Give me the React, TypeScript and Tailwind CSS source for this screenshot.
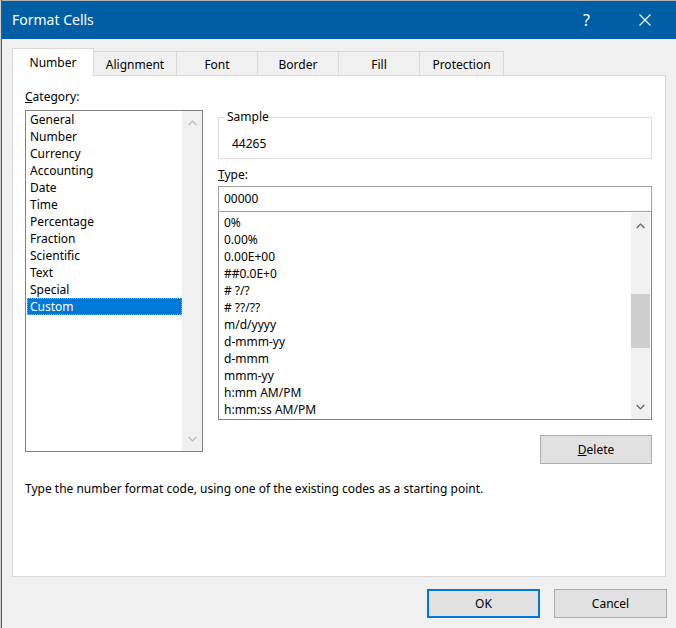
import React from "react";

const Chevron = ({ dir, color }: { dir: "up" | "down"; color: string }) => (
  <svg width="9" height="6" viewBox="0 0 9 6">
    <path
      d={dir === "up" ? "M0.7 5 L4.5 1.2 L8.3 5" : "M0.7 1 L4.5 4.8 L8.3 1"}
      fill="none"
      stroke={color}
      strokeWidth="1.2"
    />
  </svg>
);

const categories = [
  "General",
  "Number",
  "Currency",
  "Accounting",
  "Date",
  "Time",
  "Percentage",
  "Fraction",
  "Scientific",
  "Text",
  "Special",
  "Custom",
];

const types = [
  "0%",
  "0.00%",
  "0.00E+00",
  "##0.0E+0",
  "# ?/?",
  "# ??/??",
  "m/d/yyyy",
  "d-mmm-yy",
  "d-mmm",
  "mmm-yy",
  "h:mm AM/PM",
  "h:mm:ss AM/PM",
];

const tabs = [
  { name: "Number", w: "w-[82px]" },
  { name: "Alignment", w: "w-[84px]" },
  { name: "Font", w: "w-[82px]" },
  { name: "Border", w: "w-[82px]" },
  { name: "Fill", w: "w-[82px]" },
  { name: "Protection", w: "w-[85px]" },
];

export default function App() {
  return (
    <div className="w-[676px] h-[628px] flex bg-[#f0f0f0] text-black text-[12px] [font-family:'Noto_Sans',sans-serif] overflow-hidden">
      <div className="w-px bg-[#cfcfcf]" />
      <div className="flex-1 flex flex-col border-l border-[#1d62a6]">
        {/* Title bar */}
        <div className="h-[39px] border-t border-[#b4b4b4] bg-[#005ea5] flex items-center text-white">
          <div className="ml-[10px] text-[14px] leading-[20px] pb-[1px]">Format Cells</div>
          <div className="flex-1" />
          <div className="text-[16px] leading-[20px] mr-[49px] pb-[1px]">?</div>
          <div className="mr-[25px] flex items-center">
            <svg width="12" height="12" viewBox="0 0 12 12">
              <path d="M0.5 0.5 L11.5 11.5 M11.5 0.5 L0.5 11.5" stroke="white" strokeWidth="1.1" fill="none" />
            </svg>
          </div>
        </div>

        {/* Body */}
        <div className="pl-[10px] pt-[9px] flex flex-col">
          {/* Tabs */}
          <div className="flex items-end h-[28px] -mb-px">
            {tabs.map((t, i) =>
              i === 0 ? (
                <div
                  key={t.name}
                  className={`relative ${t.w} h-[28px] bg-white border-l border-t border-r border-[#d9d9d9] flex items-center justify-center`}
                >
                  {t.name}
                </div>
              ) : (
                <div
                  key={t.name}
                  className={`${t.w} -ml-px h-[25px] bg-[#f0f0f0] border-l border-t border-r border-[#d9d9d9] flex items-center justify-center pt-[1px]`}
                >
                  {t.name}
                </div>
              )
            )}
          </div>

          {/* Panel */}
          <div className="w-[654px] h-[502px] bg-white border border-[#d9d9d9] px-[12px] flex flex-col">
            <div className="flex gap-[15px] items-start">
              {/* Left column */}
              <div className="w-[178px] pt-[13px] flex flex-col">
                <div className="leading-[16px] h-[16px] mb-[5px]">
                  <span className="underline">C</span>ategory:
                </div>
                <div className="h-[342px] border border-[#828282] flex">
                  <div className="flex-1 flex flex-col pl-px">
                    {categories.map((c) =>
                      c === "Custom" ? (
                        <div
                          key={c}
                          className="h-[17px] pl-[2px] bg-[#0078d7] text-white border border-dotted border-[#f0a030]"
                        >
                          <span className="block leading-[16px]">{c}</span>
                        </div>
                      ) : (
                        <div key={c} className="h-[17px] leading-[17px] pl-[3px]">
                          {c}
                        </div>
                      )
                    )}
                  </div>
                  <div className="w-[20px] bg-[#f0f0f0] flex flex-col items-center justify-between pt-[9px] pb-[9px]">
                    <Chevron dir="up" color="#b6b6b6" />
                    <Chevron dir="down" color="#b6b6b6" />
                  </div>
                </div>
              </div>

              {/* Right column */}
              <div className="w-[434px] pt-[33px] flex flex-col">
                <fieldset className="border border-[#dcdcdc] pt-[11px] pb-[6px]">
                  <legend className="ml-[5px] pl-[3px] pr-[1px] leading-[16px]">Sample</legend>
                  <div className="leading-[16px] pl-[13px]">44265</div>
                </fieldset>
                <div className="mt-[8px] leading-[16px] h-[16px]">
                  <span className="underline">T</span>ype:
                </div>
                <div className="mt-[3px] h-[26px] border border-[#a0a0a0] flex items-center pl-[5px] pb-[1px]">
                  00000
                </div>
                <div className="h-[208px] border border-t-0 border-[#828282] flex">
                  <div className="flex-1 flex flex-col pt-[2px] pl-[5px] overflow-hidden">
                    {types.map((t) => (
                      <div key={t} className="h-[17px] leading-[17px] whitespace-pre">
                        {t}
                      </div>
                    ))}
                  </div>
                  <div className="w-[19px] mt-[1px] mr-px bg-[#f0f0f0] flex flex-col items-center">
                    <div className="h-[24px] flex items-center justify-center pt-[1px]">
                      <Chevron dir="up" color="#606060" />
                    </div>
                    <div className="h-[57px]" />
                    <div className="w-full h-[54px] bg-[#cdcdcd]" />
                    <div className="flex-1" />
                    <div className="h-[24px] flex items-center justify-center pb-[1px]">
                      <Chevron dir="down" color="#606060" />
                    </div>
                  </div>
                </div>
                <div className="mt-[15px] self-end w-[112px] h-[29px] bg-[#e1e1e1] border border-[#adadad] flex items-center justify-center">
                  <span>
                    <span className="underline">D</span>elete
                  </span>
                </div>
              </div>
            </div>
            <div className="mt-[17px] leading-[16px]">
              Type the number format code, using one of the existing codes as a starting point.
            </div>
          </div>

          {/* Bottom buttons */}
          <div className="mt-[12px] flex justify-end gap-[14px] pr-[9px]">
            <div className="w-[113px] h-[29px] bg-[#e1e1e1] border-2 border-[#0078d7] flex items-center justify-center">
              OK
            </div>
            <div className="w-[113px] h-[29px] bg-[#e1e1e1] border border-[#adadad] flex items-center justify-center">
              Cancel
            </div>
          </div>
        </div>
      </div>
    </div>
  );
}
